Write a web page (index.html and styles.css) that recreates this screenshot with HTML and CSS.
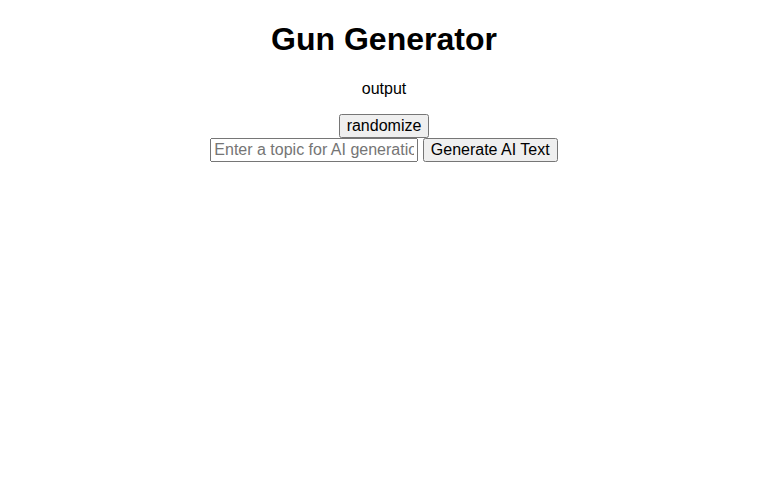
FILE: index.html
```html
<!DOCTYPE html>
<html lang="en">
<head>
    <meta charset="UTF-8" />
    <meta name="viewport" content="width=device-width, initial-scale=1.0" />
    <title>Gun Generator</title>
    <link rel="stylesheet" href="styles.css">
</head>
<body>

<h1>Gun Generator</h1>
<p id="output">output</p>
<button id="randomize">randomize</button>
<br>
<input type="text" id="topic" placeholder="Enter a topic for AI generation">
<button id="generate">Generate AI Text</button>

</body>
</html>
```

FILE: styles.css
```css
body {
    font-family: "Liberation Sans", Arial, sans-serif;
    text-align: center;
    margin: 0;
    background-color: #fff;
    color: #000;
}
h1 {
    font-size: 32px;
}
button,
input {
    font-family: "Liberation Sans", Arial, sans-serif;
    font-size: 16px;
}
#topic {
    width: 200px;
}
```
